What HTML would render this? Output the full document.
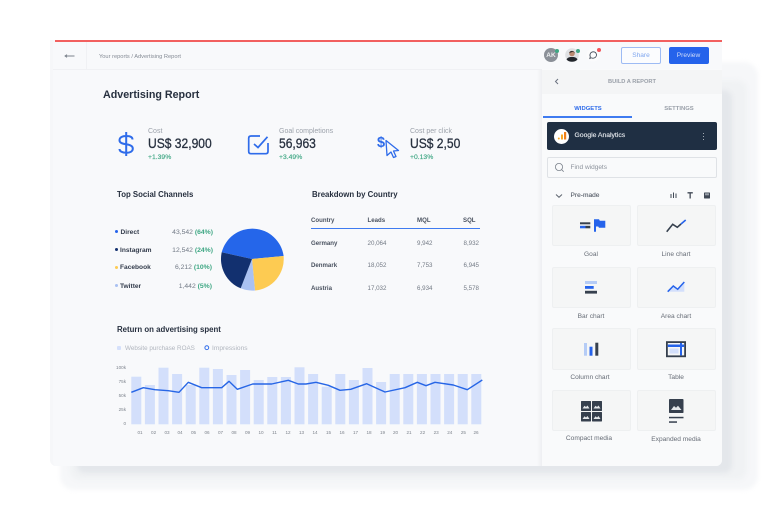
<!DOCTYPE html>
<html><head><meta charset="utf-8">
<style>
html,body{margin:0;padding:0;background:#fff}
#p{position:relative;width:768px;height:508px;overflow:hidden;background:#fff;font-family:"Liberation Sans",sans-serif;filter:blur(.3px)}
#p div{position:absolute}
.t{position:absolute;white-space:nowrap;line-height:12px;height:12px;margin-top:1px}
.c{text-align:center;width:80px}
.r{text-align:right;width:50px}
.h{font-size:8.6px;font-weight:bold;color:#27303f;transform:scaleX(.91);transform-origin:left;margin-top:-.7px}
.lab{font-size:7px;color:#9ca2ab}
.big{font-size:14.2px;color:#27303f;-webkit-text-stroke:.3px #27303f;transform:scaleX(.85);transform-origin:left;margin-top:0}
.pct{font-size:6.8px;color:#3fa784;-webkit-text-stroke:.15px #3fa784;margin-top:1.5px}
.leg{font-size:6.6px;font-weight:bold;color:#333c4c}
.val{font-size:6.8px;color:#717985}
.val b{color:#3fa784}
.th{font-size:6.1px;font-weight:bold;color:#4a5260}
.cn{font-size:6.1px;font-weight:bold;color:#4a5260}
.td{font-size:6.2px;color:#737a85}
.ax{font-size:4.6px;color:#7d838c}
.card{background:#f5f6f6;border:1px solid #eef0f1;border-radius:2px;box-sizing:border-box}
.wl{font-size:6.6px;color:#666c76}
</style></head><body>
<div id="p">
<!-- shadow layers -->
<div style="left:60px;top:62px;width:698px;height:428px;background:#f6f7f9;border-radius:14px;filter:blur(2px)"></div>
<div style="left:70px;top:80px;width:677px;height:400px;background:#f0f2f4;border-radius:10px;filter:blur(2px)"></div>
<div style="left:77px;top:90px;width:655px;height:383px;background:#e4e7eb;border-radius:8px;filter:blur(2px)"></div>
<!-- main card -->
<div style="left:50px;top:40px;width:672px;height:426px;background:#f8f9fb;border-radius:0 0 6px 6px;border-left:3px solid #f6f7f9;box-sizing:border-box"></div>
<div style="left:55px;top:40px;width:667px;height:2px;background:#f2605f"></div>
<div style="left:53px;top:69px;width:669px;height:1px;background:#f0f1f4"></div>
<div style="left:86px;top:42px;width:1px;height:27px;background:#f0f1f4"></div>
<svg style="position:absolute;left:64px;top:52px" width="12" height="8" viewBox="0 0 12 8"><path d="M1 4H10.500M3 2.600L1 4L3 5.400" fill="none" stroke="#7b828c" stroke-width=".9"/></svg>
<span class="t" style="left:99px;top:50px;font-size:5.7px;color:#858b95">Your reports / Advertising Report</span>
<span class="t" style="left:103px;top:87.500px;font-size:11.4px;font-weight:bold;color:#27303f;transform:scaleX(.94);transform-origin:left">Advertising Report</span>

<!-- KPI icons -->
<svg style="position:absolute;left:113.500px;top:130px" width="24" height="28" viewBox="0 0 24 28"><path d="M18.500 9.500C18.500 7.200 16 6 12.200 6C8.200 6 5.500 7.500 5.500 10.300C5.500 13 8.500 13.800 12.200 14.300C16 14.800 18.800 15.800 18.800 18.600C18.800 21.300 16 22.800 12.200 22.800C8.400 22.800 5.500 21.400 5.500 19M12.200 2V26" fill="none" stroke="#2f6cea" stroke-width="2"/></svg>
<svg style="position:absolute;left:246px;top:132px" width="24" height="24" viewBox="0 0 24 24"><path d="M14 4H5C3.500 4 2.700 4.800 2.700 6.300V19.400C2.700 20.900 3.500 21.700 5 21.700H19.700C21.200 21.700 22 20.900 22 19.400V11" fill="none" stroke="#2f6cea" stroke-width="1.700"/><path d="M8 12L12 15.500L21.500 4.800" fill="none" stroke="#2f6cea" stroke-width="1.700"/></svg>
<span class="t" style="left:377px;top:136px;font-size:14.500px;font-weight:bold;color:#2f6cea">$</span>
<svg style="position:absolute;left:384px;top:139px" width="16" height="20" viewBox="0 0 16 20"><path d="M2 1.500L14.500 11.500L9.500 12L12 17.500L9.500 18.500L7 13L3 16.500Z" fill="#f8f9fb" stroke="#2f6cea" stroke-width="1.300" stroke-linejoin="round"/></svg>

<span class="t lab" style="left:148px;top:125px">Cost</span>
<span class="t big" style="left:148px;top:137.500px">US$ 32,900</span>
<span class="t pct" style="left:148px;top:150px">+1.39%</span>
<span class="t lab" style="left:279px;top:125px">Goal completions</span>
<span class="t big" style="left:279px;top:137.500px">56,963</span>
<span class="t pct" style="left:279px;top:150px">+3.49%</span>
<span class="t lab" style="left:410px;top:125px">Cost per click</span>
<span class="t big" style="left:410px;top:137.500px">US$ 2,50</span>
<span class="t pct" style="left:410px;top:150px">+0.13%</span>

<!-- Social -->
<span class="t h" style="left:117px;top:188.500px">Top Social Channels</span>
<div style="left:114.500px;top:230px;width:3px;height:3px;border-radius:50%;background:#2563eb"></div>
<div style="left:114.500px;top:248px;width:3px;height:3px;border-radius:50%;background:#14316f"></div>
<div style="left:114.500px;top:266px;width:3px;height:3px;border-radius:50%;background:#fdcb52"></div>
<div style="left:114.500px;top:284px;width:3px;height:3px;border-radius:50%;background:#a9c1f2"></div>
<span class="t leg" style="left:120.500px;top:225.500px">Direct</span>
<span class="t leg" style="left:120px;top:243.500px">Instagram</span>
<span class="t leg" style="left:120px;top:261px">Facebook</span>
<span class="t leg" style="left:120px;top:279.500px">Twitter</span>
<span class="t val r" style="left:163px;top:225.500px;width:50px">43,542 <b>(64%)</b></span>
<span class="t val r" style="left:163px;top:243.500px">12,542 <b>(24%)</b></span>
<span class="t val r" style="left:162px;top:261px">6,212 <b>(10%)</b></span>
<span class="t val r" style="left:162px;top:279.500px">1,442 <b>(5%)</b></span>
<svg style="position:absolute;left:215px;top:222px" width="75" height="75" viewBox="215 222 75 75">
<path d="M252 259L221.700 252.300A31.600 31.600 0 0 1 283.600 256Z" fill="#2566ea"/>
<path d="M252 259L283.600 256A31.600 31.600 0 0 1 255 290.500Z" fill="#fdcb52"/>
<path d="M252 259L255 290.500A31.600 31.600 0 0 1 240.700 288.300Z" fill="#a9c1f2"/>
<path d="M252 259L240.700 288.300A31.600 31.600 0 0 1 221.700 252.300Z" fill="#12306f"/>
</svg>

<!-- Table -->
<span class="t h" style="left:312px;top:188.500px">Breakdown by Country</span>
<span class="t th" style="left:311px;top:214px">Country</span>
<span class="t th" style="left:367.500px;top:214px">Leads</span>
<span class="t th" style="left:417px;top:214px">MQL</span>
<span class="t th" style="left:463px;top:214px">SQL</span>
<div style="left:311px;top:228px;width:169px;height:1px;background:#3f7bf0"></div>
<span class="t cn" style="left:311px;top:236.500px">Germany</span>
<span class="t td" style="left:367.500px;top:236.500px">20,064</span>
<span class="t td" style="left:417px;top:236.500px">9,942</span>
<span class="t td" style="left:463.500px;top:236.500px">8,932</span>
<span class="t cn" style="left:311px;top:259px">Denmark</span>
<span class="t td" style="left:367.500px;top:259px">18,052</span>
<span class="t td" style="left:417px;top:259px">7,753</span>
<span class="t td" style="left:463.500px;top:259px">6,945</span>
<span class="t cn" style="left:311px;top:281.500px">Austria</span>
<span class="t td" style="left:367.500px;top:281.500px">17,032</span>
<span class="t td" style="left:417px;top:281.500px">6,934</span>
<span class="t td" style="left:463.500px;top:281.500px">5,578</span>

<!-- ROAS chart -->
<span class="t h" style="left:117px;top:323.500px">Return on advertising spent</span>
<div style="left:117px;top:345.500px;width:4px;height:4px;border-radius:1px;background:#d5e0fb"></div>
<span class="t" style="left:125px;top:341.500px;font-size:6.300px;color:#b0b5be">Website purchase ROAS</span>
<svg style="position:absolute;left:203px;top:344px" width="8" height="8" viewBox="0 0 8 8"><circle cx="3.800" cy="3.700" r="1.900" fill="none" stroke="#2f6cea" stroke-width="1"/></svg>
<span class="t" style="left:212px;top:341.500px;font-size:6.600px;color:#b0b5be">Impressions</span>
<span class="t ax" style="left:96px;top:360.500px;width:30px;text-align:right">100k</span>
<span class="t ax" style="left:96px;top:375px;width:30px;text-align:right">75k</span>
<span class="t ax" style="left:96px;top:389px;width:30px;text-align:right">50k</span>
<span class="t ax" style="left:96px;top:403px;width:30px;text-align:right">25k</span>
<span class="t ax" style="left:96px;top:417px;width:30px;text-align:right">0</span>
<svg style="position:absolute;left:125px;top:360px" width="365" height="70" viewBox="125 360 365 70">
<g fill="#d3dffb">
<rect x="131.300" y="376.700" width="10" height="47.600"/><rect x="144.900" y="385" width="10" height="39.300"/><rect x="158.500" y="367.700" width="10" height="56.600"/><rect x="172.100" y="374" width="10" height="50.300"/><rect x="185.700" y="385" width="10" height="39.300"/><rect x="199.300" y="367.700" width="10" height="56.600"/><rect x="212.900" y="369" width="10" height="55.300"/><rect x="226.500" y="375" width="10" height="49.300"/><rect x="240.100" y="370" width="10" height="54.300"/><rect x="253.700" y="380" width="10" height="44.300"/><rect x="267.300" y="377" width="10" height="47.300"/><rect x="280.900" y="377" width="10" height="47.300"/><rect x="294.500" y="367.300" width="10" height="57"/><rect x="308.100" y="374" width="10" height="50.300"/><rect x="321.700" y="386.700" width="10" height="37.600"/><rect x="335.300" y="374" width="10" height="50.300"/><rect x="348.900" y="380" width="10" height="44.300"/><rect x="362.500" y="368" width="10" height="56.300"/><rect x="376.100" y="382" width="10" height="42.300"/><rect x="389.700" y="374" width="10" height="50.300"/><rect x="403.300" y="374" width="10" height="50.300"/><rect x="416.900" y="374" width="10" height="50.300"/><rect x="430.500" y="374" width="10" height="50.300"/><rect x="444.100" y="374" width="10" height="50.300"/><rect x="457.700" y="374" width="10" height="50.300"/><rect x="471.300" y="374" width="10" height="50.300"/>
</g>
<path d="M131.300 392.300L143.300 387.700L155 389.700L168.300 390.700L179 392.300L188.300 382.300L201.700 387.700L221.700 387.700L229 381.300L237.300 389.300L252.700 384L271.700 384L288.300 380.300L298.300 384L306 384L316 382.300L328.300 385.300L340 390.300L350.700 389.300L366.700 383.700L385 392L405 387.700L417.300 382.300L426 385.700L435 382.300L453.300 385L467.300 389.700L482.300 380" fill="none" stroke="#2766e6" stroke-width="1.400" stroke-linejoin="round"/>
</svg>
<svg style="position:absolute;left:125px;top:426px" width="365" height="12" viewBox="125 426 365 12">
<g font-family="Liberation Sans" font-size="4.600" fill="#7d838c" text-anchor="middle">
<text x="140" y="434">01</text><text x="153.600" y="434">02</text><text x="167" y="434">03</text><text x="180" y="434">04</text><text x="193.500" y="434">05</text><text x="207" y="434">06</text><text x="220.500" y="434">07</text><text x="234" y="434">08</text><text x="247.500" y="434">09</text><text x="261" y="434">10</text><text x="274.500" y="434">11</text><text x="288" y="434">12</text><text x="301.500" y="434">13</text><text x="315" y="434">14</text><text x="328.500" y="434">15</text><text x="342" y="434">16</text><text x="355.500" y="434">17</text><text x="369" y="434">18</text><text x="382.500" y="434">19</text><text x="395.500" y="434">20</text><text x="409" y="434">21</text><text x="422.600" y="434">22</text><text x="436.200" y="434">23</text><text x="449.800" y="434">24</text><text x="463.400" y="434">25</text><text x="476" y="434">26</text>
</g>
</svg>

<!-- header right -->
<div style="left:544px;top:48px;width:14px;height:14px;border-radius:50%;background:#8b9098"></div>
<span class="t" style="left:544px;top:48.500px;width:14px;text-align:center;font-size:6.500px;font-weight:bold;color:#eef0f2">AK</span>
<div style="left:554.500px;top:48.500px;width:4px;height:4px;border-radius:50%;background:#3fa784"></div>
<svg style="position:absolute;left:565px;top:48px" width="15" height="15" viewBox="0 0 15 15"><circle cx="7" cy="7" r="6.800" fill="#dfe1e4"/><path d="M1.500 11.500C3 9 5 9 7 9C9 9 11 9 12.500 11.500C10 14.500 4 14.500 1.500 11.500Z" fill="#22262c"/><circle cx="7" cy="5.500" r="2.800" fill="#b98a72"/><path d="M4.200 5C4.500 2.500 9 2.200 9.800 5L8 3.800Z" fill="#2e2a2a"/></svg>
<div style="left:576px;top:48.500px;width:4px;height:4px;border-radius:50%;background:#3fa784"></div>
<svg style="position:absolute;left:586px;top:48px" width="14" height="14" viewBox="0 0 14 14"><circle cx="7" cy="7" r="6.500" fill="#fbfbfc"/><path d="M3.800 10.500L4.300 8.800C3.200 6.500 4.700 3.800 7.300 3.800C9.700 3.800 11 6 10.300 8C9.600 10 7 10.700 5.300 9.800Z" fill="none" stroke="#3b4350" stroke-width=".8"/></svg>
<div style="left:596.500px;top:48px;width:4px;height:4px;border-radius:50%;background:#f2555a"></div>
<div style="left:621px;top:47px;width:40px;height:16.500px;border:1px solid #9dbbf4;border-radius:2px;box-sizing:border-box;background:#fbfcfe"></div>
<span class="t c" style="left:601px;top:49px;font-size:6.600px;color:#7fa6ef">Share</span>
<div style="left:669px;top:47px;width:39.500px;height:16.500px;border-radius:2px;background:#2563eb"></div>
<span class="t c" style="left:648.500px;top:49px;font-size:6.600px;color:#cfdcf8">Preview</span>

<!-- side panel -->
<div style="left:537px;top:70px;width:4px;height:396px;background:linear-gradient(90deg,rgba(240,241,244,0),#f0f1f4)"></div>
<div style="left:541px;top:69px;width:181px;height:397px;background:#f9fafb;border-left:1px solid #eff0f3;box-sizing:border-box;border-radius:0 0 6px 0"></div>
<div style="left:542px;top:70px;width:180px;height:24px;background:#f4f5f6"></div>
<svg style="position:absolute;left:554px;top:78px" width="6" height="7" viewBox="0 0 6 7"><path d="M4 1L1.500 3.500L4 6" fill="none" stroke="#6b7280" stroke-width="1"/></svg>
<span class="t" style="left:592px;top:75px;width:80px;text-align:center;font-size:5.700px;font-weight:bold;color:#9aa0a9">BUILD A REPORT</span>
<span class="t" style="left:548px;top:101.500px;width:80px;text-align:center;font-size:5.900px;font-weight:bold;color:#2f6cea">WIDGETS</span>
<span class="t" style="left:639px;top:101.500px;width:80px;text-align:center;font-size:5.900px;font-weight:bold;color:#9aa0a9">SETTINGS</span>
<div style="left:543px;top:115.500px;width:89px;height:2px;background:#3f7bf0"></div>
<div style="left:547px;top:122px;width:170px;height:28px;border-radius:2px;background:#1f2f43"></div>
<div style="left:554px;top:128.500px;width:15px;height:15px;border-radius:50%;background:#fff"></div>
<svg style="position:absolute;left:554px;top:128px" width="16" height="16" viewBox="0 0 16 16"><rect x="3.800" y="9.500" width="2" height="2" rx="1" fill="#f9a825"/><rect x="7" y="6.500" width="2" height="5" fill="#f9a825"/><rect x="10" y="4" width="2.200" height="7.500" fill="#ef7f1a"/></svg>
<span class="t" style="left:574.500px;top:129px;font-size:6.800px;color:#dfe3e8;-webkit-text-stroke:.15px #dfe3e8">Google Analytics</span>
<div style="left:702.500px;top:132.500px;width:1.500px;height:1.500px;background:#cfd4da;border-radius:50%"></div>
<div style="left:702.500px;top:135.500px;width:1.500px;height:1.500px;background:#cfd4da;border-radius:50%"></div>
<div style="left:702.500px;top:138.500px;width:1.500px;height:1.500px;background:#cfd4da;border-radius:50%"></div>
<div style="left:547px;top:157px;width:170px;height:21px;border:1px solid #dfe2e6;border-radius:2px;box-sizing:border-box"></div>
<svg style="position:absolute;left:554px;top:162px" width="11" height="11" viewBox="0 0 11 11"><circle cx="5" cy="5" r="3.600" fill="none" stroke="#7b828c" stroke-width=".8"/><path d="M7.700 7.700L9.700 9.700" stroke="#7b828c" stroke-width=".8"/></svg>
<span class="t" style="left:570.500px;top:160.500px;font-size:6.500px;color:#8d939c">Find widgets</span>
<svg style="position:absolute;left:555px;top:193px" width="8" height="6" viewBox="0 0 8 6"><path d="M1 1.500L4 4.300L7 1.500" fill="none" stroke="#5f6670" stroke-width="1"/></svg>
<span class="t" style="left:570.500px;top:189px;font-size:6.600px;color:#555c67;-webkit-text-stroke:.1px #555c67">Pre-made</span>
<svg style="position:absolute;left:668px;top:190px" width="46" height="11" viewBox="0 0 46 11"><path d="M3 4V8M5.500 2.500V8M8 3.500V8" stroke="#414956" stroke-width="1"/><path d="M19.500 2.800H24.800M22.150 2.800V8.500" stroke="#414956" stroke-width="1.300" fill="none"/><rect x="36" y="2.500" width="6" height="6" rx=".6" fill="#414956"/><rect x="37" y="3.300" width="4" height="2" fill="#9aa0a9"/></svg>

<!-- widget cards -->
<div class="card" style="left:551.500px;top:205px;width:79.500px;height:41px"></div>
<div class="card" style="left:636.500px;top:205px;width:79.500px;height:41px"></div>
<div class="card" style="left:551.500px;top:267px;width:79.500px;height:41px"></div>
<div class="card" style="left:636.500px;top:267px;width:79.500px;height:41px"></div>
<div class="card" style="left:551.500px;top:328px;width:79.500px;height:42px"></div>
<div class="card" style="left:636.500px;top:328px;width:79.500px;height:42px"></div>
<div class="card" style="left:551.500px;top:390px;width:79.500px;height:41px"></div>
<div class="card" style="left:636.500px;top:390px;width:79.500px;height:41px"></div>
<span class="t wl c" style="left:551px;top:247.500px">Goal</span>
<span class="t wl c" style="left:636px;top:247.500px">Line chart</span>
<span class="t wl c" style="left:551px;top:309.500px">Bar chart</span>
<span class="t wl c" style="left:636px;top:309.500px">Area chart</span>
<span class="t wl c" style="left:550px;top:370.500px">Column chart</span>
<span class="t wl c" style="left:636px;top:371px">Table</span>
<span class="t wl c" style="left:549px;top:431.500px">Compact media</span>
<span class="t wl c" style="left:636px;top:432.500px">Expanded media</span>
<!-- widget icons -->
<svg style="position:absolute;left:579px;top:218px" width="28" height="16" viewBox="0 0 28 16"><rect x="1" y="4.300" width="10.300" height="2" fill="#36404e"/><rect x="1" y="7.800" width="5.500" height="2.500" fill="#2563eb"/><rect x="6.500" y="7.800" width="4.800" height="2.500" fill="#36404e"/><path d="M15 1.300H20L20.800 2.800H26.300V9.700H20L19.200 8.500H17V13.700H15Z" fill="#2563eb"/></svg>
<svg style="position:absolute;left:664px;top:217px" width="24" height="18" viewBox="0 0 24 18"><path d="M2.700 14.700L8.700 7.300L13.300 10.300L17 7" fill="none" stroke="#36404e" stroke-width="1.600"/><path d="M17 7L21.700 3" fill="none" stroke="#2563eb" stroke-width="1.600"/></svg>
<svg style="position:absolute;left:583px;top:279px" width="18" height="18" viewBox="0 0 18 18"><rect x="2" y="2" width="12" height="3" fill="#b5ccf6"/><rect x="2" y="7" width="8.700" height="2.800" fill="#2563eb"/><rect x="2" y="11.800" width="12" height="2.800" fill="#36404e"/></svg>
<svg style="position:absolute;left:666px;top:279px" width="22" height="16" viewBox="0 0 22 16"><path d="M1.700 12.700L7.300 7L11.700 10.300L18.300 3V12.700Z" fill="#d3dffb"/><path d="M1.700 12.700L7.300 7L11.700 10.300L18.300 3" fill="none" stroke="#2563eb" stroke-width="1.500"/></svg>
<svg style="position:absolute;left:583px;top:341px" width="18" height="16" viewBox="0 0 18 16"><rect x="1" y="2" width="3" height="12.700" fill="#b5ccf6"/><rect x="6.500" y="5.700" width="3" height="9" fill="#2563eb"/><rect x="12.300" y="1.700" width="3" height="13" fill="#36404e"/></svg>
<svg style="position:absolute;left:665px;top:340px" width="22" height="18" viewBox="0 0 22 18"><rect x="1" y="1.200" width="20" height="16" fill="#36404e"/><rect x="2.800" y="3" width="16.400" height="12.400" fill="#f5f6f6"/><rect x="2.800" y="4.500" width="16.400" height="2.500" fill="#2563eb"/><rect x="15" y="3" width="2" height="12.400" fill="#2563eb"/><rect x="4.500" y="8.500" width="9" height="5" fill="#d3dffb"/></svg>
<svg style="position:absolute;left:580px;top:400px" width="24" height="22" viewBox="0 0 24 22"><g fill="#36404e"><rect x="1" y="1" width="10" height="10" rx=".6"/><rect x="12" y="1" width="10" height="10" rx=".6"/><rect x="1" y="12" width="10" height="9.500" rx=".6"/><rect x="12" y="12" width="10" height="9.500" rx=".6"/></g><g fill="#e4e7ea"><path d="M2.500 8.500L4.500 5.800L6 7L7.500 5.500L9.500 8.500Z"/><path d="M13.500 8.500L15.500 5.800L17 7L18.500 5.500L20.500 8.500Z"/><path d="M2.500 19L4.500 16.300L6 17.500L7.500 16L9.500 19Z"/><path d="M13.500 19L15.500 16.300L17 17.500L18.500 16L20.500 19Z"/></g></svg>
<svg style="position:absolute;left:667px;top:398px" width="18" height="27" viewBox="0 0 18 27"><rect x="2" y="1" width="14.500" height="14" rx=".8" fill="#36404e"/><path d="M4 12L7 8L9 9.800L11 7.700L14.500 12Z" fill="#e4e7ea"/><rect x="2" y="18.800" width="14.500" height="1.500" fill="#36404e"/><rect x="2" y="23.300" width="8" height="1.500" fill="#36404e"/></svg>
</div>
</body></html>
